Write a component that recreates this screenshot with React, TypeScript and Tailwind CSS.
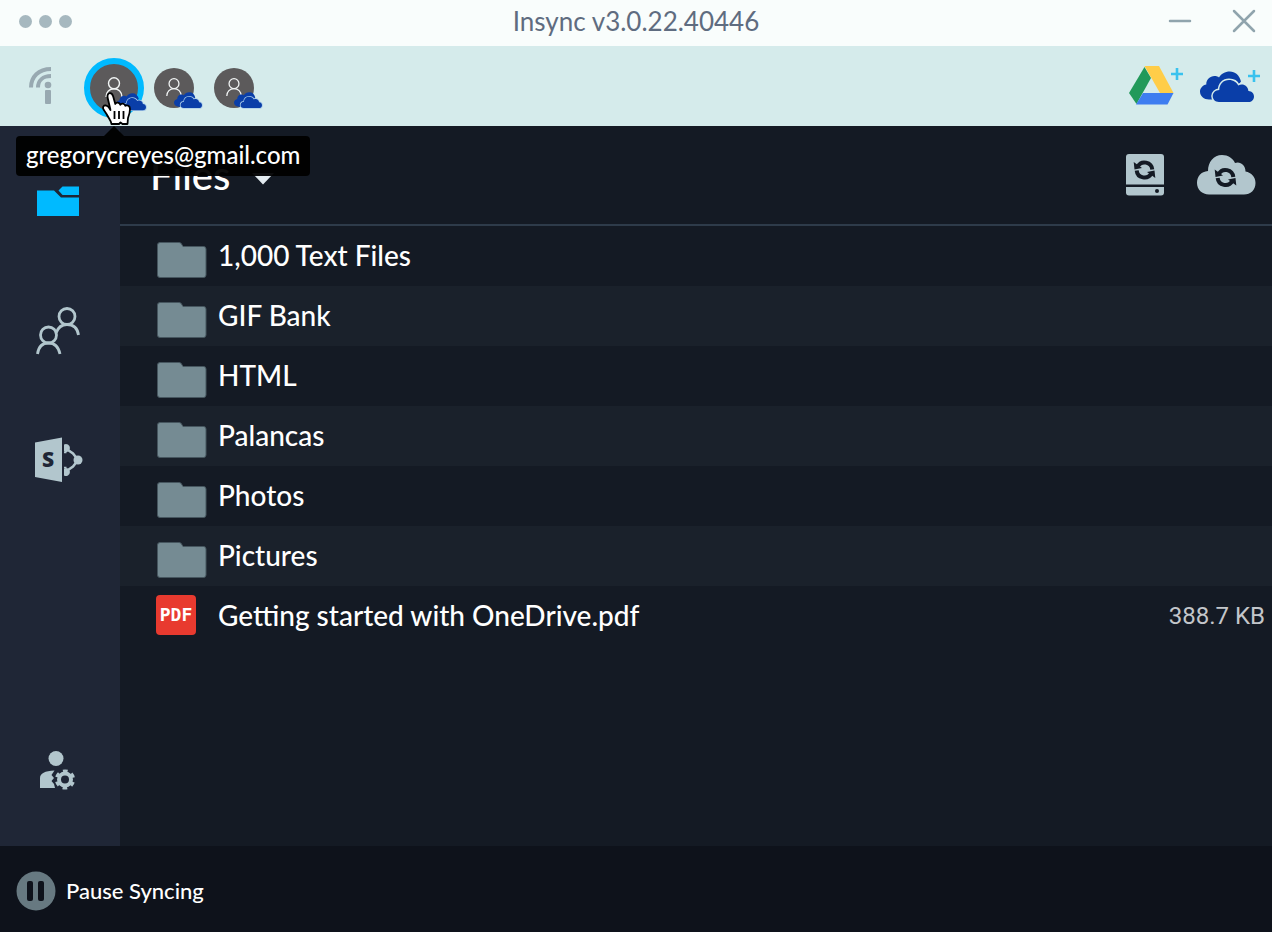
import { clsx } from "clsx";

interface FileEntry {
  name: string;
  kind: "folder" | "pdf";
  size?: string;
}

interface Account {
  email: string;
  active: boolean;
}

const files: FileEntry[] = [
  { name: "1,000 Text Files", kind: "folder" },
  { name: "GIF Bank", kind: "folder" },
  { name: "HTML", kind: "folder" },
  { name: "Palancas", kind: "folder" },
  { name: "Photos", kind: "folder" },
  { name: "Pictures", kind: "folder" },
  { name: "Getting started with OneDrive.pdf", kind: "pdf", size: "388.7 KB" },
];

const accounts: Account[] = [
  { email: "gregorycreyes@gmail.com", active: true },
  { email: "OneDrive account 2", active: false },
  { email: "OneDrive account 3", active: false },
];

function OneDriveIcon({ className, outline }: { className?: string; outline: string }) {
  return (
    <svg viewBox="0 0 54 31" className={clsx("overflow-visible", className)} aria-hidden="true">
      <path
        fill="#0a3ea8"
        d="M9 28.5C4 28.5 0 25 0 20.5C0 17 3 14 6.3 13.5C6 9 10 5 14.5 5C16.5 5 18 5.500 19 6.500C21 3 25 .5 29.8 .5C35 .5 39.500 4 41 10.500L30 24L14 28.500Z"
      />
      <path
        fill="#0a3ea8"
        stroke={outline}
        strokeWidth="3"
        paintOrder="stroke"
        d="M19 31C15 31 12.700 28.200 12.700 25C12.700 21.800 15.500 19 19.300 19C19.300 13 23.500 9 29 9C33.500 9 37 11.500 38.300 14.500C43 12 48 15 48.400 20C52 20.300 54 22.500 54 25.500C54 29 51.500 31 48.500 31Z"
      />
    </svg>
  );
}

function PersonIcon({ className }: { className?: string }) {
  return (
    <svg viewBox="0 0 20 22" fill="none" stroke="#f2f5f5" strokeWidth="1.4" className={className} aria-hidden="true">
      <circle cx="10" cy="6.3" r="5.500" />
      <path d="M2 20C2 15 5.500 11.800 10 11.800S18 15 18 20" />
    </svg>
  );
}

function InsyncLogo() {
  return (
    <svg width="24" height="40" viewBox="0 0 24 40" fill="none" aria-hidden="true">
      <g stroke="#98a9b1" strokeWidth="4">
        <path d="M3 21.5C3 11 10.5 3 23 3" />
        <path d="M10 21.5C10 14.5 15 10 23 10" />
      </g>
      <circle cx="20" cy="19" r="3.3" fill="#98a9b1" />
      <rect x="17" y="24" width="6" height="14" rx="1" fill="#98a9b1" />
    </svg>
  );
}

function DriveIcon() {
  return (
    <svg width="56" height="40" viewBox="0 0 56 40" aria-hidden="true">
      <path fill="#22995a" d="M16.500 1L23 12L8.500 38L1 27Z" />
      <path fill="#ffcd48" d="M16.500 0H31L45.500 27H32Z" />
      <path fill="#3e7df0" d="M15 27H45.500L39.500 38.500H8Z" />
      <path stroke="#39c2ee" strokeWidth="2.600" d="M49 2V14M43 8H55" />
    </svg>
  );
}

function SyncArrows() {
  return (
    <g>
      <path
        d="M-6.800 -3.500A7.800 7.800 0 0 1 7.800 -.5M6.800 3.500A7.800 7.800 0 0 1 -7.800 .5"
        fill="none"
        stroke="#141a24"
        strokeWidth="4"
      />
      <path d="M-10.800 -8L-2.500 -2L-10 -.5ZM10.800 8L2.500 2L10 .5Z" fill="#141a24" />
    </g>
  );
}

function DiskSyncIcon() {
  return (
    <svg width="38" height="42" viewBox="0 0 38 42" fill="#b2c6cd" aria-hidden="true">
      <path d="M3 0H35Q38 0 38 3V30.500H0V3Q0 0 3 0Z" />
      <path d="M0 33H38V38.500Q38 41.500 35 41.500H3Q0 41.500 0 38.500Z" />
      <circle cx="31" cy="37" r="2" fill="#141a24" />
      <g transform="translate(18.500 16)">
        <SyncArrows />
      </g>
    </svg>
  );
}

function CloudSyncIcon() {
  return (
    <svg width="60" height="42" viewBox="0 0 60 42" aria-hidden="true">
      <path
        fill="#b2c6cd"
        d="M13 40.500C6 40.500 1 35.500 1 29C1 22.500 5 17.500 12 17C12 8 17.500 1 26 1C32 1 37 4.500 39 9C44 7 49.500 11 49.500 17.500C55.500 18.500 59.500 23 59.500 29C59.500 36 54.500 40.500 48 40.500Z"
      />
      <g transform="translate(29.500 23.500)">
        <SyncArrows />
      </g>
    </svg>
  );
}

function FilesIcon() {
  return (
    <svg width="42" height="30" viewBox="0 0 42 30" fill="#00baff" aria-hidden="true">
      <path d="M0 4.500H17L24 11.500H42V30H0Z" />
      <path d="M25.500 .5H42V9H25.500L21.500 4.500Z" />
    </svg>
  );
}

function SharedIcon() {
  return (
    <svg width="44" height="48" viewBox="0 0 44 48" fill="none" stroke="#b2c6cd" strokeWidth="2.800" aria-hidden="true">
      <circle cx="31" cy="9.500" r="8" />
      <circle cx="12.500" cy="28" r="8" />
      <path d="M1.500 47C2.500 40 6.500 36 12.500 36S22.500 40 24 47" />
      <path d="M20 26C22 20.500 26 17.500 31 17.500C37.500 17.500 41.500 21.500 42.500 28" />
    </svg>
  );
}

function SharePointIcon() {
  return (
    <svg width="48" height="46" viewBox="0 0 48 46" aria-hidden="true">
      <path fill="#b2c6cd" d="M0 5.500L27 .5V45L0 40Z" />
      <text x="13" y="30" textAnchor="middle" fontSize="21" fontWeight="800" fontFamily="Open Sans, sans-serif" fill="#1f2636">
        S
      </text>
      <g fill="#b2c6cd">
        <path d="M29 7.500A4 4 0 1 1 29 14.500Z" />
        <path d="M29 31.500A4 4 0 1 1 29 38.500Z" />
        <circle cx="43" cy="23" r="4.500" />
      </g>
      <path d="M33 13L38 16.500L43 23L38 29.500L33 33" fill="none" stroke="#b2c6cd" strokeWidth="2.500" />
      <path d="M29 15.500H31.500M29 30.500H31.500" stroke="#b2c6cd" strokeWidth="1.500" />
    </svg>
  );
}

function UserSettingsIcon() {
  return (
    <svg width="36" height="40" viewBox="0 0 36 40" aria-hidden="true">
      <circle cx="16" cy="7.500" r="7.500" fill="#b2c6cd" />
      <path fill="#b2c6cd" d="M0 37V27Q0 20 14.500 19.500L11.500 24L14 27L11.500 30L14 33L15 37Z" />
      <circle cx="25" cy="28.500" r="6" fill="none" stroke="#b2c6cd" strokeWidth="4" />
      <circle
        cx="25"
        cy="28.500"
        r="8.500"
        fill="none"
        stroke="#b2c6cd"
        strokeWidth="3.200"
        strokeDasharray="4.450 4.450"
        strokeDashoffset="2.200"
        transform="rotate(30 25 28.500)"
      />
    </svg>
  );
}

function FolderIcon() {
  return (
    <svg width="52" height="48" viewBox="0 0 52 48" aria-hidden="true">
      <path
        fill="#758b93"
        stroke="#46565f"
        strokeWidth="1"
        d="M4 10.500H23Q25 10.500 25.500 12L27 14.500H47.500Q50 14.500 50 17V43Q50 45.500 47.500 45.500H4Q1.500 45.500 1.500 43V13Q1.500 10.500 4 10.500Z"
      />
    </svg>
  );
}

function PdfIcon() {
  return (
    <span className="mb-0.5 flex size-10 items-center justify-center rounded bg-[#e83a2f] pb-0.5 font-['DejaVu_Sans_Mono',monospace] text-[18px] font-bold text-white">
      PDF
    </span>
  );
}

function HandCursor() {
  return (
    <svg
      width="30"
      height="34"
      viewBox="0 0 30 34"
      className="pointer-events-none absolute top-[34px] left-[18px] z-30"
      aria-hidden="true"
    >
      <path
        fill="#fff"
        stroke="#000"
        strokeWidth="1.800"
        strokeLinejoin="round"
        d="M8.500 18L5.800 6.500C5 3 6 1.500 7.800 1.200C9.500 1 10.600 2.500 11.200 4.500L13.300 12C14 10 17.500 10 18.300 12.800C19.500 10.800 22.500 11.300 23.300 13.800C25.500 12.500 28 14 28 17C28 21 27 23.500 26 26L25.500 32H20.500L18.500 30.500L17 32H9.500C9 28.500 6.500 26 4.500 22L1.500 17.500C.5 15 1.500 13 4 13.500C6 14 7.500 16 8.500 18Z"
      />
      <path stroke="#000" strokeWidth="1.800" d="M12.500 19V27M17 19V27M21.500 19V27" />
    </svg>
  );
}

function AccountAvatar({ account }: { account: Account }) {
  return (
    <div className="relative flex size-[60px] items-center justify-center">
      <button
        aria-label={account.email}
        className={clsx(
          "flex items-center justify-center rounded-full bg-[#5c5a5b]",
          account.active ? "size-[60px] border-6 border-[#00baff]" : "size-10"
        )}
      >
        <PersonIcon className={account.active ? "w-5" : "w-[18px]"} />
      </button>
      {account.active ? (
        <OneDriveIcon outline="#a9cbe8" className="absolute right-[-2px] bottom-2 w-[30px]" />
      ) : (
        <OneDriveIcon outline="#a9cbe8" className="absolute right-[2px] bottom-[10px] w-7" />
      )}
      {account.active && (
        <>
          <HandCursor />
          <div className="absolute top-[68px] left-[20px] z-20 border-x-10 border-b-10 border-x-transparent border-b-black/95" />
          <div
            role="tooltip"
            className="absolute top-[78px] left-[-68px] z-20 h-10 rounded bg-black/95 px-[10px] text-[24px] leading-[38px] font-medium whitespace-nowrap text-white"
          >
            {account.email}
          </div>
        </>
      )}
    </div>
  );
}

function TitleBar() {
  return (
    <header className="grid h-[46px] grid-cols-3 items-center bg-[#f9fdfc]">
      <button aria-label="Menu" className="ml-[19px] flex w-fit gap-[7px] pb-1">
        <span className="size-[13px] rounded-full bg-[#a6b8bf]" />
        <span className="size-[13px] rounded-full bg-[#a6b8bf]" />
        <span className="size-[13px] rounded-full bg-[#a6b8bf]" />
      </button>
      <h1 className="pb-1 text-center text-[26px] leading-8 whitespace-nowrap text-[#5f6c80]">Insync v3.0.22.40446</h1>
      <div className="flex justify-end gap-10 pr-4 pb-1 text-[#90a4ad]">
        <button aria-label="Minimize">
          <svg width="24" height="24" viewBox="0 0 24 24" stroke="currentColor" strokeWidth="2.500" strokeLinecap="round">
            <path d="M2 12H22" />
          </svg>
        </button>
        <button aria-label="Close">
          <svg width="24" height="24" viewBox="0 0 24 24" stroke="currentColor" strokeWidth="2.500" strokeLinecap="round">
            <path d="M2 2L22 22M22 2L2 22" />
          </svg>
        </button>
      </div>
    </header>
  );
}

export default function App() {
  return (
    <div className="flex min-h-screen flex-col bg-[#141a24] font-[Lato,sans-serif] text-white">
      <TitleBar />

      {/* Accounts */}
      <div className="flex h-20 items-center justify-between bg-[#d5ebeb] pt-1 pr-3 pl-7">
        <div className="flex items-center">
          <div className="mr-8 pb-1">
            <InsyncLogo />
          </div>
          {accounts.map((account) => (
            <AccountAvatar key={account.email} account={account} />
          ))}
        </div>
        <div className="flex items-center gap-4 pb-1">
          <button aria-label="Add Google Drive account">
            <DriveIcon />
          </button>
          <button aria-label="Add OneDrive account" className="flex items-start">
            <OneDriveIcon outline="#d5ebeb" className="w-[54px]" />
            <svg width="12" height="12" viewBox="0 0 12 12" stroke="#39c2ee" strokeWidth="2.600" className="-mt-px -ml-1.5" aria-hidden="true">
              <path d="M6 0V12M0 6H12" />
            </svg>
          </button>
        </div>
      </div>

      <div className="flex flex-1">
        <nav className="flex w-[120px] shrink-0 flex-col justify-between bg-[#1f2636] py-[10px]">
          <div className="flex flex-col">
            <button aria-label="Files" className="flex h-[130px] items-center pl-[37px]">
              <FilesIcon />
            </button>
            <button aria-label="Shared with me" className="flex h-[130px] items-center pl-9">
              <SharedIcon />
            </button>
            <button aria-label="SharePoint" className="flex h-[130px] items-center pb-0.5 pl-[35px]">
              <SharePointIcon />
            </button>
          </div>
          <button aria-label="Account settings" className="flex h-[130px] items-center pl-10">
            <UserSettingsIcon />
          </button>
        </nav>

        <main className="min-w-0 flex-1">
          <div className="flex h-[100px] items-center justify-between border-b-2 border-[#2e3b4a] pr-4 pl-[30px]">
            <button className="flex items-center gap-[22px] text-[40px] leading-[48px] font-medium">
              Files
              <svg width="22" height="12" viewBox="0 0 22 12" fill="#e3ebf0" className="mt-2" aria-hidden="true">
                <path d="M0 0H22L11 11.500Z" />
              </svg>
            </button>
            <div className="flex items-center gap-8">
              <button aria-label="Sync to disk">
                <DiskSyncIcon />
              </button>
              <button aria-label="Sync to cloud">
                <CloudSyncIcon />
              </button>
            </div>
          </div>

          <table className="w-full">
            <tbody>
              {files.map((file) => (
                <tr key={file.name} className="h-[60px] even:bg-[#1a212b]">
                  <td className="w-[98px] pl-9">{file.kind === "pdf" ? <PdfIcon /> : <FolderIcon />}</td>
                  <td className="pb-0.5 text-[28px] leading-9 font-medium">{file.name}</td>
                  <td className="pr-[7px] text-right font-[Roboto,sans-serif] text-[24px] text-[#c3c6ca]">{file.size}</td>
                </tr>
              ))}
            </tbody>
          </table>
        </main>
      </div>

      <footer className="flex h-[86px] items-center bg-[#0e121b] px-4 pb-px">
        <button className="flex items-center gap-[10px] pt-1 text-[22px] font-medium">
          <svg width="40" height="40" viewBox="0 0 40 40" aria-hidden="true">
            <circle cx="20" cy="20" r="19.500" fill="#677981" />
            <rect x="11" y="10" width="6" height="20" rx="2" fill="#0e121b" />
            <rect x="22" y="10" width="6" height="20" rx="2" fill="#0e121b" />
          </svg>
          Pause Syncing
        </button>
      </footer>
    </div>
  );
}
